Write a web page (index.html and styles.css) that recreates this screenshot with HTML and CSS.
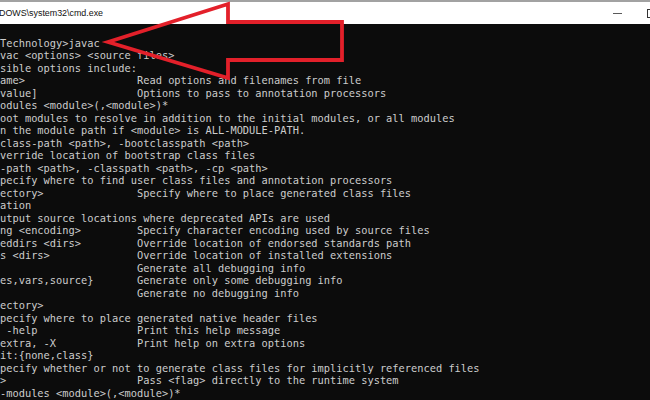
FILE: index.html
```html
<!DOCTYPE html>
<html lang="en">
<head>
<meta charset="utf-8">
<title>cmd.exe</title>
<link rel="stylesheet" href="styles.css">
</head>
<body>
<div class="window">
  <header class="titlebar">
    <span class="title">DOWS\system32\cmd.exe</span>
    <div class="controls">
      <span class="ctl-min"></span>
      <span class="ctl-max"></span>
    </div>
  </header>
  <pre class="console">Technology&gt;javac
vac &lt;options&gt; &lt;source files&gt;
sible options include:
ame&gt;                  Read options and filenames from file
value]                Options to pass to annotation processors
odules &lt;module&gt;(,&lt;module&gt;)*
oot modules to resolve in addition to the initial modules, or all modules
n the module path if &lt;module&gt; is ALL-MODULE-PATH.
class-path &lt;path&gt;, -bootclasspath &lt;path&gt;
verride location of bootstrap class files
-path &lt;path&gt;, -classpath &lt;path&gt;, -cp &lt;path&gt;
pecify where to find user class files and annotation processors
ectory&gt;               Specify where to place generated class files
ation
utput source locations where deprecated APIs are used
ng &lt;encoding&gt;         Specify character encoding used by source files
eddirs &lt;dirs&gt;         Override location of endorsed standards path
s &lt;dirs&gt;              Override location of installed extensions
                      Generate all debugging info
es,vars,source}       Generate only some debugging info
                      Generate no debugging info
ectory&gt;
pecify where to place generated native header files
 -help                Print this help message
extra, -X             Print help on extra options
it:{none,class}
pecify whether or not to generate class files for implicitly referenced files
&gt;                     Pass &lt;flag&gt; directly to the runtime system
-modules &lt;module&gt;(,&lt;module&gt;)*</pre>
  <svg class="arrow" width="650" height="400" viewBox="0 0 650 400" aria-hidden="true">
    <polygon points="108,42 228,4 228,22 342,22 342,60 228,60 228,78" fill="none" stroke="#e3202a" stroke-width="3.8" stroke-linejoin="miter"/>
  </svg>
</div>
</body>
</html>
```
FILE: styles.css
```css
html, body {
  margin: 0;
  padding: 0;
  width: 650px;
  height: 400px;
  overflow: hidden;
  background: #0c0c0c;
}

.window {
  position: relative;
  width: 650px;
  height: 400px;
  display: flex;
  flex-direction: column;
  overflow: hidden;
}

.titlebar {
  flex: 0 0 auto;
  height: 22px;
  border-top: 2px solid #a2a2a2;
  background: #ffffff;
  display: flex;
  align-items: center;
  justify-content: space-between;
}

.title {
  margin-left: -1px;
  font-family: "Liberation Sans", Arial, sans-serif;
  font-size: 8.9px;
  color: #111111;
  white-space: nowrap;
}

.controls {
  display: flex;
  align-items: center;
  gap: 25px;
  margin-right: -6px;
}

.ctl-min {
  display: block;
  width: 9px;
  height: 1px;
  background: #5a5a5a;
}

.ctl-max {
  display: block;
  width: 7px;
  height: 7px;
  border: 1px solid #333333;
}

.console {
  flex: 1 1 auto;
  margin: 0;
  padding: 12.5px 0 0 0;
  font-family: "DejaVu Sans Mono", "Liberation Mono", monospace;
  font-size: 10.35px;
  line-height: 12.5px;
  color: #cccccc;
  white-space: pre;
  overflow: hidden;
}

.arrow {
  position: absolute;
  left: 0;
  top: 0;
  pointer-events: none;
}
```
